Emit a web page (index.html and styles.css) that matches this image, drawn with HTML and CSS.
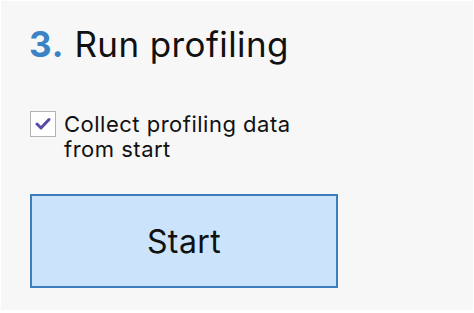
FILE: index.html
```html
<!DOCTYPE html>
<html lang="en">
<head>
  <meta charset="UTF-8">
  <meta name="viewport" content="width=device-width, initial-scale=1.0">
  <title>Run profiling</title>
  <link rel="stylesheet" href="styles.css">
</head>
<body>

  <!-- step 3 panel -->
  <div class="panel">
    <h2 class="step-title"><span class="step-num">3.</span> Run profiling</h2>

    <label class="check-row">
      <span class="check-box">
        <svg width="16" height="14" viewBox="0 0 16 14">
          <path d="M2 7 L6 11 L14 2.5" fill="none" stroke="#5a4aa6" stroke-width="3" stroke-linecap="round" stroke-linejoin="round"/>
        </svg>
      </span>
      <span class="check-text">Collect profiling data<br>from start</span>
    </label>

    <button class="start-btn">Start</button>
  </div>

</body>
</html>
```

FILE: styles.css
```css
body {
  margin: 0;
  padding: 0;
  background: #ffffff;
  font-family: Inter, "Noto Sans", sans-serif;
  color: #111;
}

.panel {
  margin: 1px 1px 0 1px;
  height: 309px;
  box-sizing: border-box;
  background: #f7f7f7;
  padding: 21px 28px;
}

.step-title {
  margin: 0;
  font-size: 35px;
  font-weight: 400;
  line-height: 44px;
  letter-spacing: 0.4px;
}
.step-num {
  color: #3a84c6;
  font-weight: 700;
  letter-spacing: 0.8px;
}

.check-row {
  display: flex;
  align-items: flex-start;
  gap: 8px;
  margin-top: 46px;
}
.check-box {
  width: 24px;
  height: 24px;
  border: 1px solid #b3b3b3;
  background: #fff;
  display: flex;
  align-items: center;
  justify-content: center;
  flex-shrink: 0;
  margin-top: -1px;
  margin-left: 1px;
}
.check-text {
  font-size: 22px;
  line-height: 25px;
  letter-spacing: 0.5px;
}

.start-btn {
  display: block;
  margin-top: 32px;
  margin-left: 1px;
  width: 308px;
  height: 94px;
  background: #cbe4fc;
  border: 2px solid #3c7dbd;
  border-radius: 0;
  font-family: Inter, "Noto Sans", sans-serif;
  font-size: 32px;
  letter-spacing: 0.4px;
  color: #111;
  cursor: pointer;
}
```
